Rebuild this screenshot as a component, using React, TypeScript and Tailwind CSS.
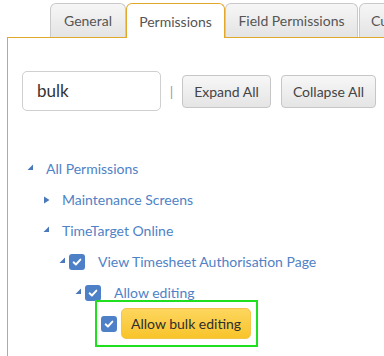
import React from "react";

type RowProps = {
  level: number;
  toggle?: "open" | "closed";
  checked?: boolean;
  label: string;
  highlight?: boolean;
};

function Toggle({ kind }: { kind?: "open" | "closed" }) {
  return (
    <div className="w-4 h-[31px] flex items-center justify-center shrink-0">
      {kind === "open" && (
        <svg width="7" height="7" viewBox="0 0 7 7" className="-mt-[3px]">
          <polygon points="6,0.5 6,6 0.5,6" fill="#4b78b8" />
        </svg>
      )}
      {kind === "closed" && (
        <svg width="6" height="8" viewBox="0 0 6 8" className="ml-[1px]">
          <polygon points="0,0.5 5.5,4 0,7.5" fill="#4b78b8" />
        </svg>
      )}
    </div>
  );
}

function Check() {
  return (
    <div className="w-4 h-4 -ml-px rounded-[3px] bg-[#4d80c6] flex items-center justify-center shrink-0">
      <svg width="12" height="12" viewBox="0 0 12 12">
        <path d="M2.6 6.3 L4.9 8.5 L9.4 3.6" fill="none" stroke="#fff" strokeWidth="1.9" strokeLinecap="round" strokeLinejoin="round" />
      </svg>
    </div>
  );
}

function Row({ level, toggle, checked, label, highlight }: RowProps) {
  return (
    <div className="h-[31px] flex items-center" style={{ paddingLeft: level * 16 }}>
      <Toggle kind={toggle} />
      {highlight ? (
        <div className="relative flex items-center">
          <Check />
          <div className="ml-[4px] h-[31px] px-[9px] flex items-center rounded-[5px] border border-[#f2c64a] bg-gradient-to-b from-[#fdd65c] to-[#f8c428] text-[14px] text-[#2e2e2e] whitespace-nowrap">
            {label}
          </div>
          <div className="absolute -left-[7px] -top-[8px] -right-[7px] -bottom-[8px] border-2 border-[#1fe01f] pointer-events-none" />
        </div>
      ) : checked ? (
        <>
          <Check />
          <div className="ml-[4px] px-[9px] text-[14px] text-[#4f82c6] whitespace-nowrap">{label}</div>
        </>
      ) : (
        <div className="px-[8px] text-[14px] text-[#4f82c6] whitespace-nowrap">{label}</div>
      )}
    </div>
  );
}

function Tab({ label, width, active }: { label: string; width: number | string; active?: boolean }) {
  if (active) {
    return (
      <div
        className="relative z-10 -mb-px h-[35px] shrink-0 flex items-center justify-center rounded-t-[6px] border border-b-0 border-[#e2a82c] bg-white text-[14px] text-[#555] whitespace-nowrap"
        style={{ width }}
      >
        {label}
      </div>
    );
  }
  return (
    <div
      className="h-[34px] shrink-0 flex items-center justify-center rounded-t-[6px] border border-b-0 border-[#c9c9c9] bg-gradient-to-b from-[#f6f6f6] to-[#e4e4e4] text-[14px] text-[#555] whitespace-nowrap"
      style={{ width }}
    >
      {label}
    </div>
  );
}

export default function App() {
  return (
    <div className="w-[384px] h-[356px] overflow-hidden bg-white flex flex-col font-['Lato','Open_Sans',sans-serif]">
      <div className="flex items-end pl-[50px] pt-[3px] h-[37px] shrink-0">
        <Tab label="General" width={76} />
        <Tab label="Permissions" width={99} active />
        <Tab label="Field Permissions" width={133} />
        <div className="ml-px h-[34px] shrink-0 flex items-center pl-[11px] pr-[14px] rounded-t-[6px] border border-b-0 border-[#c9c9c9] bg-gradient-to-b from-[#f6f6f6] to-[#e4e4e4] text-[14px] text-[#555] whitespace-nowrap">
          Custom
        </div>
      </div>
      <div className="ml-[7px] flex-1 border-l border-t border-[#e2a82c] pl-[14px] pt-[33px]">
        <div className="flex items-center">
          <div className="w-[139px] h-[40px] rounded-[5px] border border-[#cfcfcf] pl-[14px] flex items-center text-[17px] text-[#333]">
            bulk
          </div>
          <div className="w-[21px] text-center text-[14px] text-[#9a9a9a]">|</div>
          <div className="w-[89px] h-[33px] rounded-[4px] border border-[#c6c6c6] bg-gradient-to-b from-[#f7f7f7] to-[#e5e5e5] flex items-center justify-center text-[14px] text-[#444]">
            Expand All
          </div>
          <div className="ml-[10px] w-[95px] h-[33px] rounded-[4px] border border-[#c6c6c6] bg-gradient-to-b from-[#f7f7f7] to-[#e5e5e5] flex items-center justify-center text-[14px] text-[#444]">
            Collapse All
          </div>
        </div>
        <div className="mt-[42px]">
          <Row level={0} toggle="open" label="All Permissions" />
          <Row level={1} toggle="closed" label="Maintenance Screens" />
          <Row level={1} toggle="open" label="TimeTarget Online" />
          <Row level={2} toggle="open" checked label="View Timesheet Authorisation Page" />
          <Row level={3} toggle="open" checked label="Allow editing" />
          <Row level={4} checked highlight label="Allow bulk editing" />
        </div>
      </div>
    </div>
  );
}
